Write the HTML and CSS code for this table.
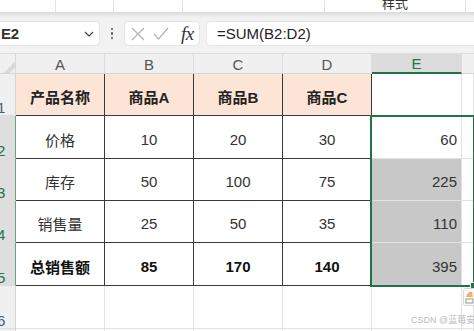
FILE: index.html
```html
<!DOCTYPE html>
<html>
<head>
<meta charset="utf-8">
<link rel="stylesheet" href="styles.css">
</head>
<body>
<div class="ribbon">
  <div class="seg s1"></div>
  <div class="seg s2"></div>
  <div class="seg s3"></div>
  <div class="seg s4"></div>
  <div class="seg s5"><span class="rlabel">样式</span></div>
  <div class="seg s6"></div>
</div>
<div class="fbar">
  <div class="namebox">
    <span class="ref">E2</span>
    <svg class="chev" width="10" height="6" viewBox="0 0 10 6"><path d="M1 1 L5 5 L9 1" fill="none" stroke="#444" stroke-width="1.2"/></svg>
  </div>
  <div class="dots"><i></i><i></i><i></i></div>
  <div class="fxbox">
    <svg width="14" height="14" viewBox="0 0 14 14"><path d="M1 1 L13 13 M13 1 L1 13" stroke="#b4b4b4" stroke-width="1.2" fill="none"/></svg>
    <svg width="16" height="13" viewBox="0 0 16 13"><path d="M1 7 L5.5 12 L15 1" stroke="#b4b4b4" stroke-width="1.2" fill="none"/></svg>
    <span class="fx">fx</span>
  </div>
  <div class="formula">=SUM(B2:D2)</div>
</div>
<div class="sheet">
  <div class="corner"></div>
  <div class="ch">A</div><div class="ch">B</div><div class="ch">C</div><div class="ch">D</div><div class="ch sel">E</div><div class="ch last"></div>

  <div class="rh">1</div>
  <div class="c t hd">产品名称</div><div class="c t hd">商品A</div><div class="c t hd">商品B</div><div class="c t hd">商品C</div><div class="c"></div><div class="c"></div>

  <div class="rh on">2</div>
  <div class="c t">价格</div><div class="c t">10</div><div class="c t">20</div><div class="c t">30</div><div class="c num">60</div><div class="c"></div>

  <div class="rh on">3</div>
  <div class="c t">库存</div><div class="c t">50</div><div class="c t">100</div><div class="c t">75</div><div class="c num gray">225</div><div class="c"></div>

  <div class="rh on">4</div>
  <div class="c t">销售量</div><div class="c t">25</div><div class="c t">50</div><div class="c t">35</div><div class="c num gray">110</div><div class="c"></div>

  <div class="rh on">5</div>
  <div class="c t b">总销售额</div><div class="c t b">85</div><div class="c t b">170</div><div class="c t b">140</div><div class="c num gray">395</div><div class="c"></div>

  <div class="rh">6</div>
  <div class="c"></div><div class="c"></div><div class="c"></div><div class="c"></div><div class="c"></div><div class="c"></div>

  <div class="rh">7</div>
  <div class="c"></div><div class="c"></div><div class="c"></div><div class="c"></div><div class="c"></div><div class="c"></div>

  <div class="selbox"><span class="handle"></span></div>
  <div class="qa">
    <svg width="12" height="18" viewBox="0 0 12 18"><rect x="0.5" y="0.5" width="14" height="17" rx="2" fill="#fafafa" stroke="#d6d6d6"/><path d="M3 9 Q5 3 9 4 L10 9 Z" fill="#f0b070"/><rect x="3" y="11" width="7" height="4" fill="none" stroke="#999" stroke-width="1"/></svg>
  </div>
  <div class="wm">CSDN @蓝莓安</div>
</div>
</body>
</html>
```
FILE: styles.css
```css
html, body {
  margin: 0;
  padding: 0;
}
body {
  width: 474px;
  height: 331px;
  overflow: hidden;
  background: #fff;
  font-family: "Liberation Sans", "Noto Sans CJK SC", sans-serif;
  color: #333;
}
.ribbon {
  display: flex;
  height: 12px;
  background: #fff;
  overflow: hidden;
}
.seg {
  border-right: 1px solid #e2e2e2;
  box-sizing: border-box;
  display: flex;
  justify-content: center;
  align-items: flex-end;
}
.s1 { width: 56px; }
.s2 { width: 58px; }
.s3 { width: 69px; }
.s4 { width: 142px; }
.s5 { width: 141px; }
.s6 { flex: 1; border-right: none; }
.rlabel {
  font-family: "Noto Sans CJK SC", sans-serif;
  font-size: 13px;
  line-height: 13px;
  margin-bottom: 3px;
  color: #333;
}
.fbar {
  height: 41px;
  box-sizing: border-box;
  padding-top: 9px;
  background: #f2f2f2;
  box-shadow: inset 0 5px 4px -3px rgba(0,0,0,0.13);
  display: flex;
  align-items: flex-start;
}
.namebox {
  margin-left: -8px;
  width: 108px;
  height: 25px;
  box-sizing: border-box;
  background: #fff;
  border: 1px solid #e6e6e6;
  border-radius: 5px;
  display: flex;
  align-items: center;
  padding-left: 8px;
  padding-right: 5px;
}
.ref {
  flex: 1;
  font-size: 15px;
  font-weight: bold;
  color: #333;
  letter-spacing: -0.3px;
}
.chev { margin-top: 1px; }
.dots {
  width: 24px;
  height: 25px;
  display: flex;
  flex-direction: column;
  align-items: center;
  justify-content: center;
  gap: 2px;
}
.dots i {
  display: block;
  width: 2.5px;
  height: 2.5px;
  border-radius: 50%;
  background: #555;
}
.fxbox {
  width: 76px;
  height: 25px;
  box-sizing: border-box;
  background: #fff;
  border: 1px solid #e6e6e6;
  border-radius: 5px;
  display: flex;
  align-items: center;
  padding-left: 6px;
  gap: 8px;
}
.fx {
  font-family: "Liberation Serif", serif;
  font-style: italic;
  font-size: 19px;
  color: #333;
  margin-left: 4px;
  letter-spacing: -0.5px;
}
.formula {
  margin-left: 6px;
  flex: 1;
  height: 25px;
  box-sizing: border-box;
  background: #fff;
  border: 1px solid #e6e6e6;
  border-right: none;
  border-radius: 5px 0 0 5px;
  padding-left: 10px;
  font-size: 15px;
  line-height: 23px;
  color: #222;
}
.sheet {
  position: relative;
  display: grid;
  grid-template-columns: 16px 89px 89px 89px 89px 90px 1fr;
  grid-template-rows: 20px 42px 43px 42px 42px 43px 43px 20px;
  background: #fff;
  border-top: 1px solid #dcdcdc;
  box-sizing: border-box;
}
.corner {
  background: #f0f0f0 linear-gradient(135deg, transparent 58%, #dadada 58%, #dadada 80%, transparent 80%) no-repeat;
  background-size: 14px 14px;
  background-position: 1px 5px;
  border-right: 1px solid #dadada;
  border-bottom: 1px solid #d4d4d4;
}
.ch {
  background: #f0f0f0;
  border-right: 1px solid #dcdcdc;
  border-bottom: 1px solid #d4d4d4;
  font-size: 15px;
  color: #555;
  display: flex;
  align-items: center;
  justify-content: center;
  padding-top: 1px;
}
.ch.sel {
  background: #dcdcdc;
  color: #217346;
  border-bottom: 2px solid #217346;
}
.ch.last { border-right: none; }
.rh {
  background: #f0f0f0;
  border-right: 1px solid #d4d4d4;
  border-bottom: 1px solid #dcdcdc;
  font-size: 15px;
  line-height: 15px;
  color: #4a5a70;
  overflow: hidden;
  display: flex;
  align-items: flex-end;
  text-indent: -3px;
}
.rh.on {
  background: #dedede;
  color: #217346;
  border-right: 1px solid #6f9f83;
}
.c {
  border-right: 1px solid #e2e2e2;
  border-bottom: 1px solid #e2e2e2;
  font-size: 15px;
  color: #333;
  display: flex;
  align-items: center;
  justify-content: center;
  padding-top: 4px;
}
.c.t {
  border-right: 1px solid #3a3a3a;
  border-bottom: 1px solid #3a3a3a;
}
.c.hd {
  background: #fce4d6;
  font-weight: bold;
  color: #222;
}
.c.b {
  font-weight: bold;
  color: #111;
}
.c.num {
  justify-content: flex-end;
  padding-right: 4px;
}
.c.gray { background: #c8c8c8; }
.selbox {
  position: absolute;
  grid-column: 6;
  grid-row: 3 / span 4;
  top: -1px;
  left: -2px;
  right: -1px;
  bottom: -1px;
  border: 2px solid #217346;
  pointer-events: none;
}
.handle {
  position: absolute;
  right: -4px;
  bottom: -4px;
  width: 5px;
  height: 5px;
  background: #217346;
  border: 1px solid #fff;
}
.qa {
  position: absolute;
  left: 463px;
  top: 234px;
}
.wm {
  position: absolute;
  left: 411px;
  top: 259px;
  font-size: 9px;
  color: #bdbdbd;
  font-family: "Liberation Sans", "Noto Sans CJK SC", sans-serif;
  white-space: nowrap;
}
```
